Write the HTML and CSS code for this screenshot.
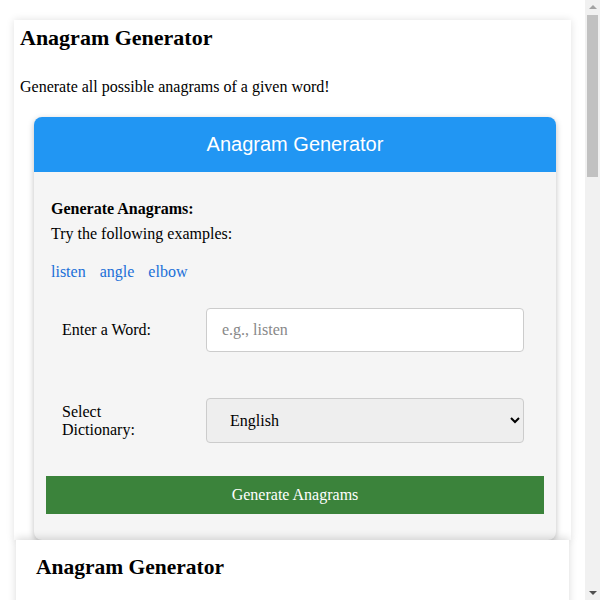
FILE: index.html
```html
<!DOCTYPE html>
<html>
<head>
<meta charset="utf-8">
<link rel="stylesheet" href="styles.css">
</head>
<body>
<div class="viewport">
  <div class="page first">
    <h2 class="page-title">Anagram Generator</h2>
    <p class="page-desc">Generate all possible anagrams of a given word!</p>
    <div class="card">
      <div class="card-header">Anagram Generator</div>
      <div class="card-body">
        <div class="intro">
          <div class="intro-title">Generate Anagrams:</div>
          <div class="intro-text">Try the following examples:</div>
          <div class="examples">
            <a href="#" class="example">listen</a>
            <a href="#" class="example">angle</a>
            <a href="#" class="example">elbow</a>
          </div>
        </div>
        <div class="form-row row-word">
          <label class="form-label" for="word">Enter a Word:</label>
          <input class="form-input" id="word" type="text" placeholder="e.g., listen">
        </div>
        <div class="form-row row-dict">
          <label class="form-label" for="dict">Select Dictionary:</label>
          <select class="form-select" id="dict">
            <option>English</option>
            <option>Spanish</option>
          </select>
        </div>
        <button class="generate-btn" type="button">Generate Anagrams</button>
      </div>
    </div>
  </div>
  <div class="page second">
    <h2 class="second-title">Anagram Generator</h2>
    <p class="page-desc second-desc">Generate all possible anagrams of a given word!</p>
  </div>
</div>
<div class="scrollbar" aria-hidden="true">
  <div class="sb-arrow sb-up"></div>
  <div class="sb-thumb"></div>
  <div class="sb-arrow sb-down"></div>
</div>
</body>
</html>
```

FILE: styles.css
```css
html, body {
  margin: 0;
  padding: 0;
  background: #ffffff;
}
body {
  font-family: "Liberation Serif", "Times New Roman", serif;
  font-size: 16px;
  color: #000;
}
.viewport {
  width: 585px;
}
.page {
  margin: 0 auto;
  background: #fff;
  box-sizing: border-box;
  position: relative;
}
.first {
  width: 557px;
  margin-top: 20px;
  padding: 1px 6px 0;
  box-shadow: 0 0 8px rgba(0, 0, 0, 0.12);
}
.page-title {
  font-size: 22px;
  font-weight: bold;
  margin: 3px 0 0;
  line-height: 28px;
}
.page-desc {
  margin: 26px 0 0;
  line-height: 18px;
}
.second-desc {
  margin-top: 40px;
}
.card {
  width: 522px;
  margin: 21px 0 0 14px;
  background: #f5f5f5;
  border-radius: 8px;
  box-shadow: 0 2px 6px rgba(0, 0, 0, 0.25);
  overflow: hidden;
}
.card-header {
  background: #2196f3;
  color: #fff;
  font-family: "Liberation Sans", Arial, sans-serif;
  font-size: 20px;
  height: 55px;
  line-height: 55px;
  text-align: center;
}
.card-body {
  padding: 25px 12px 26px;
}
.intro {
  padding: 0 5px;
}
.intro-title {
  font-weight: bold;
  line-height: 24px;
}
.intro-text {
  line-height: 25px;
}
.examples {
  display: flex;
  gap: 14px;
  margin-top: 14px;
  line-height: 24px;
}
.example {
  color: #1a6fd8;
  text-decoration: none;
}
.form-row {
  display: flex;
  align-items: center;
  padding: 0 20px 0 16px;
}
.row-word {
  margin-top: 24px;
}
.row-dict {
  margin-top: 46px;
}
.form-label {
  width: 144px;
  flex: none;
  line-height: 18px;
  padding-right: 44px;
  box-sizing: border-box;
}
.form-input,
.form-select {
  flex: 1;
  font-family: "Liberation Serif", "Times New Roman", serif;
  font-size: 16px;
  border: 1px solid #ccc;
  border-radius: 4px;
  box-sizing: border-box;
  color: #000;
}
.form-input {
  height: 44px;
  padding: 12px 15px;
  background: #fff;
}
.form-input::placeholder {
  color: #888;
}
.form-select {
  height: 45px;
  padding: 0 19px;
  background: #eeeeee;
}
.generate-btn {
  display: block;
  width: 100%;
  margin-top: 33px;
  height: 38px;
  border: none;
  background: #3b833b;
  color: #fff;
  font-family: "Liberation Serif", "Times New Roman", serif;
  font-size: 16px;
}
.second {
  width: 553px;
  padding: 14px 20px 40px;
  box-shadow: 0 -2px 8px rgba(0, 0, 0, 0.15);
}
.second-title {
  font-size: 21.5px;
  margin: 0;
  line-height: 27px;
}
.scrollbar {
  position: fixed;
  top: 0;
  right: 0;
  width: 15px;
  height: 600px;
  background: #f1f1f1;
}
.sb-thumb {
  position: absolute;
  left: 2px;
  top: 15px;
  width: 11px;
  height: 162px;
  background: #c1c1c1;
}
.sb-arrow {
  position: absolute;
  left: 4px;
  width: 0;
  height: 0;
  border-left: 4px solid transparent;
  border-right: 4px solid transparent;
}
.sb-up {
  top: 5px;
  border-bottom: 4px solid #a3a3a3;
}
.sb-down {
  bottom: 5px;
  border-top: 4px solid #505050;
}
```
